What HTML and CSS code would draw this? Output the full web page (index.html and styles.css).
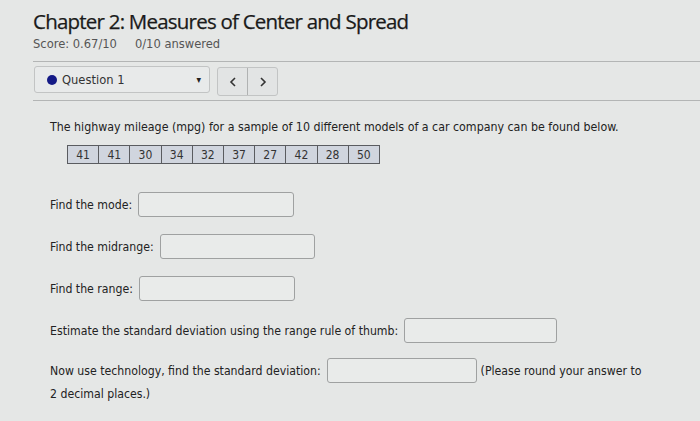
FILE: index.html
```html
<!DOCTYPE html>
<html>
<head>
<meta charset="utf-8">
<link rel="stylesheet" href="styles.css">
</head>
<body>
<div class="page">
  <h1 class="title">Chapter 2: Measures of Center and Spread</h1>
  <div class="score"><span>Score: 0.67/10</span><span>0/10 answered</span></div>
  <div class="qbar">
    <div class="qselect">
      <span class="dot"></span>
      <span class="qlabel">Question 1</span>
      <span class="caret">&#9662;</span>
    </div>
    <div class="nav">
      <span class="navbtn"><svg width="8" height="10" viewBox="0 0 8 10"><path d="M6 1 L2 5 L6 9" fill="none" stroke="#333" stroke-width="1.6"/></svg></span>
      <span class="navbtn"><svg width="8" height="10" viewBox="0 0 8 10"><path d="M2 1 L6 5 L2 9" fill="none" stroke="#333" stroke-width="1.6"/></svg></span>
    </div>
  </div>
  <div class="question">
    <p class="intro">The highway mileage (mpg) for a sample of 10 different models of a car company can be found below.</p>
    <table class="data">
      <tr><td>41</td><td>41</td><td>30</td><td>34</td><td>32</td><td>37</td><td>27</td><td>42</td><td>28</td><td>50</td></tr>
    </table>
    <div class="fields">
      <div class="row"><span>Find the mode:</span><span class="inp"></span></div>
      <div class="row"><span>Find the midrange:</span><span class="inp w2"></span></div>
      <div class="row"><span>Find the range:</span><span class="inp"></span></div>
      <div class="row"><span>Estimate the standard deviation using the range rule of thumb:</span><span class="inp w3"></span></div>
      <p class="last"><span>Now use technology, find the standard deviation:</span> <span class="inp inl"></span> <span>(Please round your answer to 2 decimal places.)</span></p>
    </div>
  </div>
</div>
</body>
</html>
```

FILE: styles.css
```css
html, body {
  margin: 0;
  padding: 0;
  background: #e5e7e6;
}
body {
  width: 700px;
  height: 421px;
  overflow: hidden;
  font-family: "DejaVu Sans Condensed", "DejaVu Sans", sans-serif;
  color: #222;
}
.page {
  padding: 7px 0 0 33px;
}
.title {
  margin: 0;
  font-family: "Open Sans", sans-serif;
  font-weight: 500;
  font-size: 20.5px;
  line-height: 29px;
  color: #1a1a1a;
  letter-spacing: -0.78px;
  -webkit-text-stroke: 0.25px #1a1a1a;
}
.score {
  display: flex;
  gap: 18px;
  font-size: 12.8px;
  line-height: 16px;
  color: #555;
}
.qbar {
  margin-top: 9px;
  border-top: 1px solid #b3b5b5;
  border-bottom: 1px solid #b3b5b5;
  padding: 4px 0 4px 1px;
  display: flex;
  gap: 7px;
  align-items: flex-start;
}
.qselect {
  width: 176px;
  height: 27px;
  border: 1px solid #c2c4c4;
  border-radius: 3px;
  display: flex;
  align-items: center;
  box-sizing: border-box;
  padding-left: 12px;
  font-size: 12.8px;
  color: #333;
  background: #e8eaea;
}
.dot {
  width: 10px;
  height: 10px;
  border-radius: 50%;
  background: #141a86;
  margin-right: 5px;
}
.qlabel { flex: 1; }
.caret {
  font-size: 10px;
  margin-right: 8px;
  color: #222;
}
.nav {
  display: flex;
  margin-top: 1px;
  border: 1px solid #c2c4c4;
  border-radius: 3px;
  height: 29px;
  box-sizing: border-box;
  background: #e2e4e4;
}
.navbtn {
  width: 29px;
  display: flex;
  align-items: center;
  justify-content: center;
}
.navbtn + .navbtn { border-left: 1px solid #b0b2b2; }
.question {
  padding-left: 17px;
}
.intro {
  margin: 18px 0 0 0;
  font-size: 12.3px;
  line-height: 16px;
}
.data {
  margin: 10px 0 0 17px;
  border-collapse: collapse;
  background: #d0d5de;
  font-size: 12px;
}
.data td {
  border: 1px solid #5a5c60;
  width: 30.2px;
  height: 17px;
  padding: 0;
  text-align: center;
  color: #333;
}
.fields {
  margin-top: 28px;
  display: flex;
  flex-direction: column;
  gap: 17px;
  font-size: 12.2px;
}
.row {
  display: flex;
  align-items: center;
  gap: 6px;
}
.inp {
  display: inline-block;
  width: 156px;
  height: 25px;
  box-sizing: border-box;
  border: 1px solid #9fa1a1;
  border-radius: 3px;
  background: #e9ebea;
}
.w2 { width: 155px; }
.w3 { width: 153px; }
.last {
  margin: 0;
  width: 598px;
  line-height: 23px;
}
.inl {
  width: 150px;
  vertical-align: middle;
  margin: -2px 0 0 3px;
}
```
